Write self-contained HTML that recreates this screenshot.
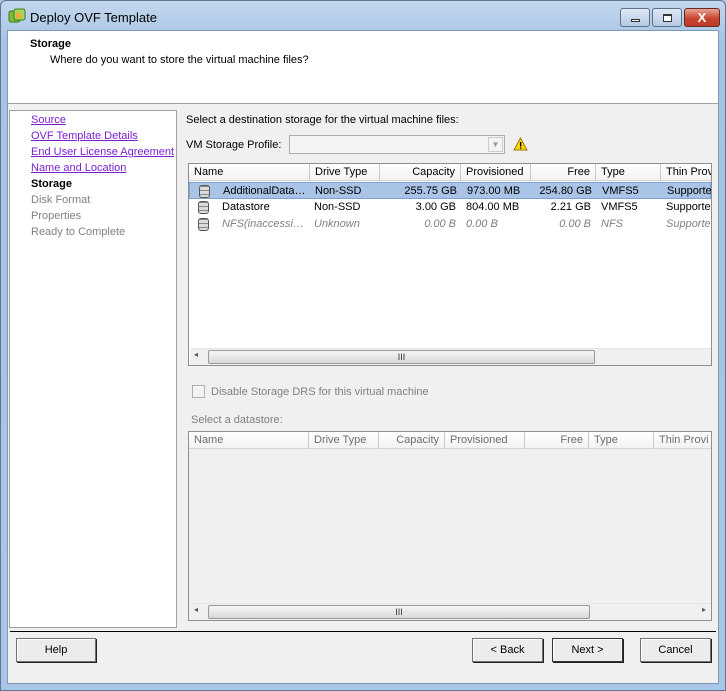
<!DOCTYPE html>
<html><head><style>
*{box-sizing:border-box;margin:0;padding:0}
body{width:726px;height:691px;overflow:hidden;font-family:"Liberation Sans",Arial,sans-serif;font-size:11px;color:#000;background:#a9c7e8;position:relative}
.abs{position:absolute}
.frame{left:0;top:0;width:726px;height:691px;background:linear-gradient(#c4d8ee,#a7c3e4 40px,#a9c6e6);border:1px solid #5c7795;border-radius:6px 6px 0 0}
.title{left:30px;top:10px;font-size:13px;font-family:"Liberation Sans",sans-serif;color:#000}
.client{left:7px;top:30px;width:712px;height:654px;background:#f0f0f0;border:1px solid #7f98b5}
.hdr{left:0;top:0;width:710px;height:73px;background:#fff;border-bottom:1px solid #a0a0a0}
.nav{left:1px;top:79px;width:168px;height:518px;background:#fff;border:1px solid #a0a0a0}
.nav div{position:absolute;left:21px;font-size:11px;white-space:nowrap}
.lk{color:#7b1fd0;text-decoration:underline}
.gr{color:#808080}
.tbl{background:#fff;border:1px solid #8e8f8f}
.th{position:absolute;top:0;height:17px;border-right:1px solid #c9c9c9;background:linear-gradient(#fff,#f2f2f2);border-bottom:1px solid #d5d5d5;padding:2px 5px;white-space:nowrap;overflow:hidden}
.row{position:absolute;left:0;height:17px;width:100%}
.c{position:absolute;top:2px;white-space:nowrap;overflow:hidden}
.r{text-align:right}
.btn{position:absolute;top:607px;height:24px;border:1px solid #707070;background:#ececec;text-align:center;line-height:22px;font-size:11px;box-shadow:inset 1px 1px #fff,1px 1px #222}
.sb{position:absolute;left:1px;height:17px;background:#f0f0f0;border-top:1px solid #e6e6e6}
.thumb{position:absolute;top:1px;height:14px;border:1px solid #999;border-radius:2px;background:linear-gradient(#f6f6f6,#d8d8d8);text-align:center;font-size:9px;line-height:12px;color:#333}
.ic{position:absolute;left:9px;top:2px;width:11px;height:13px;border-radius:3px;background:repeating-linear-gradient(#888 0 1px,#dcdcdc 1px 4px);border:1px solid #555}
</style></head><body>
<div class="abs frame"></div>
<svg class="abs" style="left:8px;top:8px" width="18" height="18" viewBox="0 0 18 18"><rect x="1" y="3" width="11" height="11" rx="2" fill="#7dbb3a" stroke="#3d7a1a"/><rect x="6" y="1" width="11" height="11" rx="2" fill="#a7d45b" stroke="#3d7a1a"/><rect x="8" y="5" width="5" height="5" fill="#f1a93a"/></svg>
<div class="abs title">Deploy OVF Template</div>
<div class="abs" style="left:620px;top:8px;width:30px;height:19px;border:1px solid #5a6f8a;border-radius:3px;background:linear-gradient(#dfe9f5,#b6c9e1)"><div style="position:absolute;left:10px;top:10px;width:9px;height:3px;border:1px solid #333;background:#fff"></div></div>
<div class="abs" style="left:652px;top:8px;width:30px;height:19px;border:1px solid #5a6f8a;border-radius:3px;background:linear-gradient(#dfe9f5,#b6c9e1)"><div style="position:absolute;left:10px;top:5px;width:9px;height:8px;border:1px solid #333;border-top-width:2px;background:#fff"></div></div>
<div class="abs" style="left:684px;top:8px;width:36px;height:19px;border:1px solid #6b2a20;border-radius:3px;background:linear-gradient(#e8a393,#c8452f 55%,#c0392a);color:#fff;font-weight:bold;text-align:center;font-size:13px;line-height:17px;font-family:'Liberation Sans',sans-serif">X</div>
<div class="abs client">
 <div class="abs hdr">
  <div class="abs" style="left:22px;top:7px;font-weight:bold;font-size:11px">Storage</div>
  <div class="abs" style="left:42px;top:23px">Where do you want to store the virtual machine files?</div>
 </div>
 <div class="abs nav">
  <div class="lk" style="top:3px">Source</div>
  <div class="lk" style="top:19px">OVF Template Details</div>
  <div class="lk" style="top:35px">End User License Agreement</div>
  <div class="lk" style="top:51px">Name and Location</div>
  <div style="top:67px;font-weight:bold">Storage</div>
  <div class="gr" style="top:83px">Disk Format</div>
  <div class="gr" style="top:99px">Properties</div>
  <div class="gr" style="top:115px">Ready to Complete</div>
 </div>
 <div class="abs" style="left:178px;top:83px">Select a destination storage for the virtual machine files:</div>
 <div class="abs" style="left:178px;top:108px">VM Storage Profile:</div>
 <div class="abs" style="left:281px;top:104px;width:216px;height:19px;border:1px solid #adadad;background:#f4f4f4"><div style="position:absolute;right:1px;top:1px;width:15px;height:15px;border:1px solid #ccc;color:#999;font-size:8px;text-align:center;line-height:14px">▼</div></div>
 <svg class="abs" style="left:505px;top:106px" width="15" height="14" viewBox="0 0 15 14"><path d="M7.5 1 L14 13 L1 13 Z" fill="#f7d40d" stroke="#a07a00"/><rect x="7" y="5" width="1.3" height="4.5" fill="#000"/><rect x="7" y="10.5" width="1.3" height="1.3" fill="#000"/></svg>
 <div class="abs tbl" style="left:180px;top:132px;width:524px;height:203px;overflow:hidden">
  <div class="th" style="left:0;width:121px">Name</div>
  <div class="th" style="left:121px;width:70px">Drive Type</div>
  <div class="th r" style="left:191px;width:81px">Capacity</div>
  <div class="th" style="left:272px;width:70px">Provisioned</div>
  <div class="th r" style="left:342px;width:65px">Free</div>
  <div class="th" style="left:407px;width:65px">Type</div>
  <div class="th" style="left:472px;width:60px">Thin Prov</div>
  <div class="row" style="top:18px;background:#a9c4e6;border:1px solid #7da2ce">
   <div class="ic"></div><div class="c" style="left:33px;width:86px">AdditionalData…</div><div class="c" style="left:125px">Non-SSD</div><div class="c r" style="left:191px;width:76px">255.75 GB</div><div class="c" style="left:277px">973.00 MB</div><div class="c r" style="left:342px;width:60px">254.80 GB</div><div class="c" style="left:412px">VMFS5</div><div class="c" style="left:477px">Supporte</div>
  </div>
  <div class="row" style="top:35px">
   <div class="ic"></div><div class="c" style="left:33px">Datastore</div><div class="c" style="left:125px">Non-SSD</div><div class="c r" style="left:191px;width:76px">3.00 GB</div><div class="c" style="left:277px">804.00 MB</div><div class="c r" style="left:342px;width:60px">2.21 GB</div><div class="c" style="left:412px">VMFS5</div><div class="c" style="left:477px">Supporte</div>
  </div>
  <div class="row" style="top:52px;color:#808080;font-style:italic">
   <div class="ic"></div><div class="c" style="left:33px">NFS(inaccessi…</div><div class="c" style="left:125px">Unknown</div><div class="c r" style="left:191px;width:76px">0.00 B</div><div class="c" style="left:277px">0.00 B</div><div class="c r" style="left:342px;width:60px">0.00 B</div><div class="c" style="left:412px">NFS</div><div class="c" style="left:477px">Supporte</div>
  </div>
  <div class="sb" style="top:184px;width:522px"><span style="position:absolute;left:4px;top:1px;font-size:8px;color:#555">◂</span><div class="thumb" style="left:18px;width:387px">III</div></div>
 </div>
 <div class="abs" style="left:184px;top:354px;width:13px;height:13px;border:1px solid #b0b0b0;background:#f4f4f4"></div>
 <div class="abs gr" style="left:203px;top:355px">Disable Storage DRS for this virtual machine</div>
 <div class="abs gr" style="left:183px;top:383px">Select a datastore:</div>
 <div class="abs tbl" style="left:180px;top:400px;width:524px;height:190px;overflow:hidden;background:#f0f0f0;color:#6d6d6d">
  <div class="th" style="left:0;width:120px">Name</div>
  <div class="th" style="left:120px;width:70px">Drive Type</div>
  <div class="th r" style="left:190px;width:66px">Capacity</div>
  <div class="th" style="left:256px;width:80px">Provisioned</div>
  <div class="th r" style="left:336px;width:64px">Free</div>
  <div class="th" style="left:400px;width:65px">Type</div>
  <div class="th" style="left:465px;width:70px">Thin Provi</div>
  <div class="sb" style="top:171px;width:522px"><span style="position:absolute;left:4px;top:1px;font-size:8px;color:#555">◂</span><span style="position:absolute;right:6px;top:1px;font-size:8px;color:#555">▸</span><div class="thumb" style="left:18px;width:382px">III</div></div>
 </div>
 <div class="abs" style="left:2px;top:600px;width:706px;height:1px;background:#000"></div>
 <div class="btn" style="left:8px;width:80px">Help</div>
 <div class="btn" style="left:464px;width:71px">&lt; Back</div>
 <div class="btn" style="left:544px;width:71px;border-color:#333">Next &gt;</div>
 <div class="btn" style="left:632px;width:71px">Cancel</div>
</div>
</body></html>
